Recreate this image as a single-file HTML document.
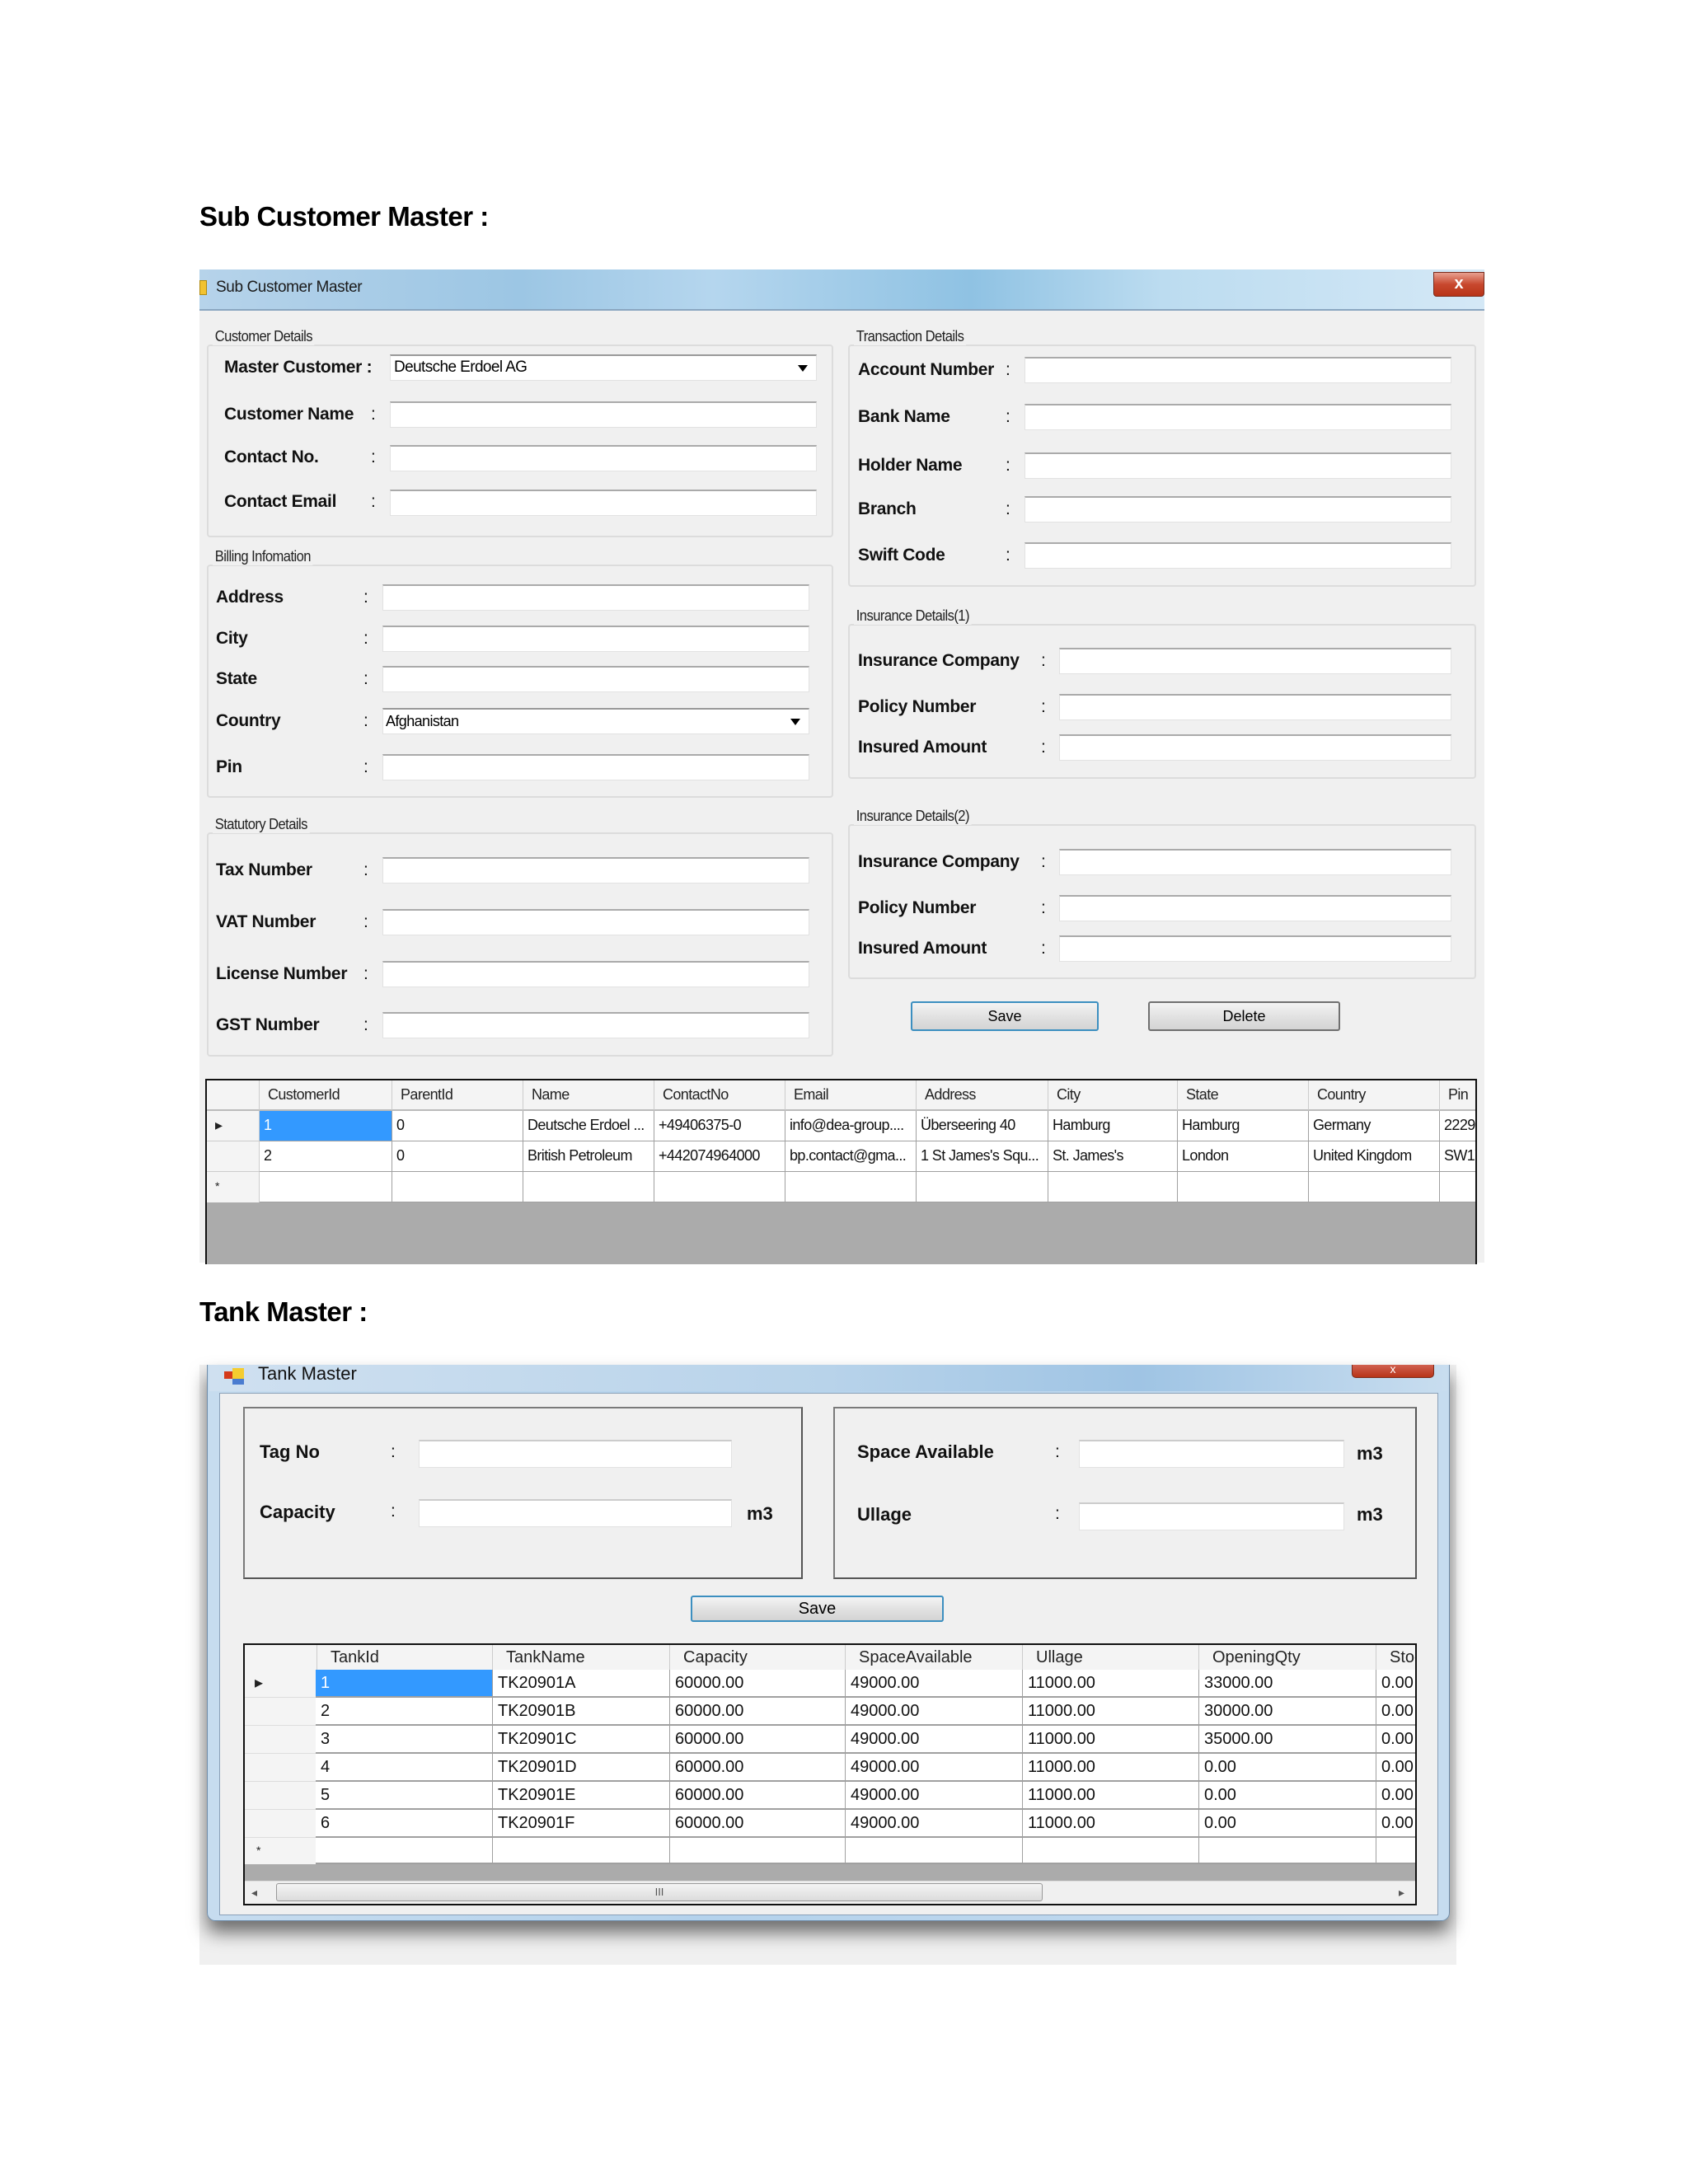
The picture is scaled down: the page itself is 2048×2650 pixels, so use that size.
<!DOCTYPE html>
<html><head><meta charset="utf-8"><style>
*{box-sizing:border-box;margin:0;padding:0}
body{width:2048px;height:2650px;background:#fff;position:relative;font-family:"Liberation Sans",sans-serif;overflow:hidden}
div,span{position:absolute}
.h{font-weight:bold;font-size:33px;color:#000;letter-spacing:-0.5px}
.win{background:#f0f0f0}
.gb{border:2px solid #dcdcdc;border-radius:4px}
.gt{font-size:18px;color:#222;background:#f0f0f0;padding:0 3px;letter-spacing:-0.6px;transform:scaleX(.92);transform-origin:left}
.l{font-size:21px;font-weight:bold;color:#111;letter-spacing:-0.3px}
.c{font-size:21px;color:#111}
.f{background:#fff;border:1px solid #e2e2e2;border-top:2px solid #aaa;height:32px}
.btn{border:2px solid #707070;border-radius:3px;background:linear-gradient(#f4f4f4,#e2e2e2 50%,#d4d4d4);font-size:18px;text-align:center}
.g{background:#fff;border:1px solid #bbb}
.gh{background:#f4f4f4;border-right:1px solid #ccc;border-bottom:2px solid #bbb;font-size:18px;color:#222;padding-left:10px;white-space:nowrap;overflow:hidden;letter-spacing:-0.6px}
.gc{background:#fff;border-right:1px solid #a0a0a0;border-bottom:1px solid #a0a0a0;font-size:18px;color:#111;padding-left:5px;white-space:nowrap;overflow:hidden;letter-spacing:-0.6px}
.tl{font-size:22px;font-weight:bold;color:#111}
.tc{font-size:20px;color:#111;padding-left:6px;white-space:nowrap;overflow:hidden;background:#fff;border-right:1px solid #a0a0a0;border-bottom:2px solid #a0a0a0}
.th{font-size:20px;color:#222;padding-left:16px;white-space:nowrap;overflow:hidden;background:#f4f4f4;border-right:1px solid #ccc;border-bottom:2px solid #bbb}
</style></head><body>

<div class="h" style="left:242px;top:244px">Sub Customer Master :</div>

<!-- window 1 -->
<div class="win" style="left:242px;top:327px;width:1559px;height:1205px"></div>
<div style="left:242px;top:327px;width:1559px;height:50px;background:linear-gradient(90deg,#b6d3ea,#9cc6e4 25%,#b5d6ee 40%,#8fc2e3 60%,#bcdcf0 75%,#d4e8f6);border-bottom:2px solid #8aa6c0"></div>
<div style="left:242px;top:340px;width:9px;height:18px;background:#f2c230;border:1px solid #b08a10"></div>
<div style="left:262px;top:338px;font-size:19px;color:#1a1a1a;letter-spacing:-0.4px">Sub Customer Master</div>
<div style="left:1739px;top:330px;width:62px;height:30px;background:linear-gradient(#e8a090,#c8482e 50%,#b83418);border:1px solid #7a2a1a;border-radius:0 0 4px 4px;color:#fff;font-weight:bold;font-size:20px;text-align:center;line-height:26px">x</div>

<!-- Customer Details -->
<div class="gb" style="left:251px;top:418px;width:760px;height:234px"></div>
<div class="gt" style="left:258px;top:398px">Customer Details</div>
<div class="l" style="left:272px;top:434px">Master Customer :</div>
<div class="f" style="left:473px;top:430px;width:518px;border-top-color:#999"><span style="left:4px;top:3px;font-size:19px;letter-spacing:-0.6px">Deutsche Erdoel AG</span><span style="right:10px;top:11px;width:0;height:0;border-left:6px solid transparent;border-right:6px solid transparent;border-top:8px solid #000"></span></div>
<div class="l" style="left:272px;top:491px">Customer Name</div><div class="c" style="left:450px;top:491px">:</div>
<div class="f" style="left:473px;top:487px;width:518px"></div>
<div class="l" style="left:272px;top:543px">Contact No.</div><div class="c" style="left:450px;top:543px">:</div>
<div class="f" style="left:473px;top:540px;width:518px"></div>
<div class="l" style="left:272px;top:597px">Contact Email</div><div class="c" style="left:450px;top:597px">:</div>
<div class="f" style="left:473px;top:594px;width:518px"></div>

<!-- Billing -->
<div class="gb" style="left:251px;top:685px;width:760px;height:283px"></div>
<div class="gt" style="left:258px;top:665px">Billing Infomation</div>
<div class="l" style="left:262px;top:713px">Address</div><div class="c" style="left:441px;top:713px">:</div><div class="f" style="left:464px;top:709px;width:518px"></div>
<div class="l" style="left:262px;top:763px">City</div><div class="c" style="left:441px;top:763px">:</div><div class="f" style="left:464px;top:759px;width:518px"></div>
<div class="l" style="left:262px;top:812px">State</div><div class="c" style="left:441px;top:812px">:</div><div class="f" style="left:464px;top:808px;width:518px"></div>
<div class="l" style="left:262px;top:863px">Country</div><div class="c" style="left:441px;top:863px">:</div>
<div class="f" style="left:464px;top:859px;width:518px;border-top-color:#999"><span style="left:3px;top:4px;font-size:18px;letter-spacing:-0.6px">Afghanistan</span><span style="right:10px;top:11px;width:0;height:0;border-left:6px solid transparent;border-right:6px solid transparent;border-top:8px solid #000"></span></div>
<div class="l" style="left:262px;top:919px">Pin</div><div class="c" style="left:441px;top:919px">:</div><div class="f" style="left:464px;top:915px;width:518px"></div>

<!-- Statutory -->
<div class="gb" style="left:251px;top:1010px;width:760px;height:272px"></div>
<div class="gt" style="left:258px;top:990px">Statutory Details</div>
<div class="l" style="left:262px;top:1044px">Tax Number</div><div class="c" style="left:441px;top:1044px">:</div><div class="f" style="left:464px;top:1040px;width:518px"></div>
<div class="l" style="left:262px;top:1107px">VAT Number</div><div class="c" style="left:441px;top:1107px">:</div><div class="f" style="left:464px;top:1103px;width:518px"></div>
<div class="l" style="left:262px;top:1170px">License Number</div><div class="c" style="left:441px;top:1170px">:</div><div class="f" style="left:464px;top:1166px;width:518px"></div>
<div class="l" style="left:262px;top:1232px">GST Number</div><div class="c" style="left:441px;top:1232px">:</div><div class="f" style="left:464px;top:1228px;width:518px"></div>

<!-- Transaction -->
<div class="gb" style="left:1029px;top:418px;width:762px;height:294px"></div>
<div class="gt" style="left:1036px;top:398px">Transaction Details</div>
<div class="l" style="left:1041px;top:437px">Account Number</div><div class="c" style="left:1220px;top:437px">:</div><div class="f" style="left:1243px;top:433px;width:518px"></div>
<div class="l" style="left:1041px;top:494px">Bank Name</div><div class="c" style="left:1220px;top:494px">:</div><div class="f" style="left:1243px;top:490px;width:518px"></div>
<div class="l" style="left:1041px;top:553px">Holder Name</div><div class="c" style="left:1220px;top:553px">:</div><div class="f" style="left:1243px;top:549px;width:518px"></div>
<div class="l" style="left:1041px;top:606px">Branch</div><div class="c" style="left:1220px;top:606px">:</div><div class="f" style="left:1243px;top:602px;width:518px"></div>
<div class="l" style="left:1041px;top:662px">Swift Code</div><div class="c" style="left:1220px;top:662px">:</div><div class="f" style="left:1243px;top:658px;width:518px"></div>

<!-- Insurance 1 -->
<div class="gb" style="left:1029px;top:757px;width:762px;height:188px"></div>
<div class="gt" style="left:1036px;top:737px">Insurance Details(1)</div>
<div class="l" style="left:1041px;top:790px">Insurance Company</div><div class="c" style="left:1263px;top:790px">:</div><div class="f" style="left:1285px;top:786px;width:476px"></div>
<div class="l" style="left:1041px;top:846px">Policy Number</div><div class="c" style="left:1263px;top:846px">:</div><div class="f" style="left:1285px;top:842px;width:476px"></div>
<div class="l" style="left:1041px;top:895px">Insured Amount</div><div class="c" style="left:1263px;top:895px">:</div><div class="f" style="left:1285px;top:891px;width:476px"></div>

<!-- Insurance 2 -->
<div class="gb" style="left:1029px;top:1000px;width:762px;height:188px"></div>
<div class="gt" style="left:1036px;top:980px">Insurance Details(2)</div>
<div class="l" style="left:1041px;top:1034px">Insurance Company</div><div class="c" style="left:1263px;top:1034px">:</div><div class="f" style="left:1285px;top:1030px;width:476px"></div>
<div class="l" style="left:1041px;top:1090px">Policy Number</div><div class="c" style="left:1263px;top:1090px">:</div><div class="f" style="left:1285px;top:1086px;width:476px"></div>
<div class="l" style="left:1041px;top:1139px">Insured Amount</div><div class="c" style="left:1263px;top:1139px">:</div><div class="f" style="left:1285px;top:1135px;width:476px"></div>

<div class="btn" style="left:1105px;top:1215px;width:228px;height:36px;border-color:#3c8fc0;line-height:32px">Save</div>
<div class="btn" style="left:1393px;top:1215px;width:233px;height:36px;line-height:32px">Delete</div>

<!-- grid 1 -->
<div style="left:249px;top:1309px;width:1543px;height:225px;background:#ababab;border:2px solid #111;border-bottom:none;overflow:hidden">
<div class="gh" style="left:0;top:0;width:64px;height:37px"></div>
<div class="gh" style="left:64px;top:0;width:161px;height:37px;line-height:35px">CustomerId</div>
<div class="gh" style="left:225px;top:0;width:159px;height:37px;line-height:35px">ParentId</div>
<div class="gh" style="left:384px;top:0;width:159px;height:37px;line-height:35px">Name</div>
<div class="gh" style="left:543px;top:0;width:159px;height:37px;line-height:35px">ContactNo</div>
<div class="gh" style="left:702px;top:0;width:159px;height:37px;line-height:35px">Email</div>
<div class="gh" style="left:861px;top:0;width:160px;height:37px;line-height:35px">Address</div>
<div class="gh" style="left:1021px;top:0;width:157px;height:37px;line-height:35px">City</div>
<div class="gh" style="left:1178px;top:0;width:159px;height:37px;line-height:35px">State</div>
<div class="gh" style="left:1337px;top:0;width:159px;height:37px;line-height:35px">Country</div>
<div class="gh" style="left:1496px;top:0;width:60px;height:37px;line-height:35px">Pin</div>

<div class="gh" style="left:0;top:37px;width:64px;height:37px;line-height:35px;border-bottom:1px solid #ccc">▸</div>
<div class="gc" style="left:64px;top:37px;width:161px;height:37px;line-height:35px;background:#3399ff;color:#fff">1</div>
<div class="gc" style="left:225px;top:37px;width:159px;height:37px;line-height:35px">0</div>
<div class="gc" style="left:384px;top:37px;width:159px;height:37px;line-height:35px">Deutsche Erdoel ...</div>
<div class="gc" style="left:543px;top:37px;width:159px;height:37px;line-height:35px">+49406375-0</div>
<div class="gc" style="left:702px;top:37px;width:159px;height:37px;line-height:35px">info@dea-group....</div>
<div class="gc" style="left:861px;top:37px;width:160px;height:37px;line-height:35px">Überseering 40</div>
<div class="gc" style="left:1021px;top:37px;width:157px;height:37px;line-height:35px">Hamburg</div>
<div class="gc" style="left:1178px;top:37px;width:159px;height:37px;line-height:35px">Hamburg</div>
<div class="gc" style="left:1337px;top:37px;width:159px;height:37px;line-height:35px">Germany</div>
<div class="gc" style="left:1496px;top:37px;width:60px;height:37px;line-height:35px">22297</div>

<div class="gh" style="left:0;top:74px;width:64px;height:37px;border-bottom:1px solid #ccc"></div>
<div class="gc" style="left:64px;top:74px;width:161px;height:37px;line-height:35px">2</div>
<div class="gc" style="left:225px;top:74px;width:159px;height:37px;line-height:35px">0</div>
<div class="gc" style="left:384px;top:74px;width:159px;height:37px;line-height:35px">British Petroleum</div>
<div class="gc" style="left:543px;top:74px;width:159px;height:37px;line-height:35px">+442074964000</div>
<div class="gc" style="left:702px;top:74px;width:159px;height:37px;line-height:35px">bp.contact@gma...</div>
<div class="gc" style="left:861px;top:74px;width:160px;height:37px;line-height:35px">1 St James's Squ...</div>
<div class="gc" style="left:1021px;top:74px;width:157px;height:37px;line-height:35px">St. James's</div>
<div class="gc" style="left:1178px;top:74px;width:159px;height:37px;line-height:35px">London</div>
<div class="gc" style="left:1337px;top:74px;width:159px;height:37px;line-height:35px">United Kingdom</div>
<div class="gc" style="left:1496px;top:74px;width:60px;height:37px;line-height:35px">SW1Y</div>

<div class="gh" style="left:0;top:111px;width:64px;height:37px;line-height:35px;font-size:14px;border-bottom:none">*</div>
<div class="gc" style="left:64px;top:111px;width:161px;height:37px"></div>
<div class="gc" style="left:225px;top:111px;width:159px;height:37px"></div>
<div class="gc" style="left:384px;top:111px;width:159px;height:37px"></div>
<div class="gc" style="left:543px;top:111px;width:159px;height:37px"></div>
<div class="gc" style="left:702px;top:111px;width:159px;height:37px"></div>
<div class="gc" style="left:861px;top:111px;width:160px;height:37px"></div>
<div class="gc" style="left:1021px;top:111px;width:157px;height:37px"></div>
<div class="gc" style="left:1178px;top:111px;width:159px;height:37px"></div>
<div class="gc" style="left:1337px;top:111px;width:159px;height:37px"></div>
<div class="gc" style="left:1496px;top:111px;width:60px;height:37px"></div>
</div>

<!-- Tank master -->
<div class="h" style="left:242px;top:1573px">Tank Master :</div>
<div style="left:242px;top:1656px;width:1525px;height:728px;background:#f0f0f0"></div>
<div style="left:251px;top:1656px;width:1508px;height:675px;border-radius:0 0 10px 10px;background:linear-gradient(90deg,#c6dcef,#b4d2ec 40%,#c6dcef);box-shadow:0 14px 22px rgba(0,0,0,.55);border:1px solid #6e8aa6;border-top:none"></div>
<div style="left:254px;top:1656px;width:1502px;height:32px;background:linear-gradient(90deg,#cfe0f0,#b8d3ea 50%,#9fc4e4 75%,#c8ddef)"></div>
<div style="left:272px;top:1664px;width:10px;height:9px;background:#d43a1a"></div>
<div style="left:282px;top:1660px;width:14px;height:13px;background:#f4cc30"></div>
<div style="left:282px;top:1673px;width:14px;height:7px;background:#4a7cd0"></div>
<div style="left:313px;top:1654px;font-size:22px;color:#111">Tank Master</div>
<div style="left:1640px;top:1656px;width:100px;height:16px;background:linear-gradient(#d06050,#b83418);border-radius:0 0 5px 5px;border:1px solid #7a2a1a;border-top:none;color:#fff;font-size:14px;text-align:center;line-height:10px">x</div>
<div style="left:266px;top:1690px;width:1479px;height:634px;background:#f0f0f0;border:1px solid #8aa0b8"></div>

<div style="left:295px;top:1707px;width:679px;height:209px;border:2px solid #7a7a7a;border-right-color:#555;border-bottom-color:#555"></div>
<div class="tl" style="left:315px;top:1749px">Tag No</div><div class="c" style="left:474px;top:1750px">:</div>
<div class="f" style="left:508px;top:1747px;width:380px;height:34px;border-top-color:#ccc"></div>
<div class="tl" style="left:315px;top:1822px">Capacity</div><div class="c" style="left:474px;top:1822px">:</div>
<div class="f" style="left:508px;top:1819px;width:380px;height:34px;border-top-color:#ccc"></div>
<div class="tl" style="left:906px;top:1824px">m3</div>

<div style="left:1011px;top:1707px;width:708px;height:209px;border:2px solid #7a7a7a;border-right-color:#555;border-bottom-color:#555"></div>
<div class="tl" style="left:1040px;top:1749px">Space Available</div><div class="c" style="left:1280px;top:1750px">:</div>
<div class="f" style="left:1309px;top:1747px;width:322px;height:34px;border-top-color:#ccc"></div>
<div class="tl" style="left:1646px;top:1751px">m3</div>
<div class="tl" style="left:1040px;top:1825px">Ullage</div><div class="c" style="left:1280px;top:1825px">:</div>
<div class="f" style="left:1309px;top:1823px;width:322px;height:34px;border-top-color:#ccc"></div>
<div class="tl" style="left:1646px;top:1825px">m3</div>

<div class="btn" style="left:838px;top:1936px;width:307px;height:32px;border-color:#3c8fc0;line-height:28px;font-size:20px">Save</div>

<!-- grid 2 -->
<div style="left:295px;top:1994px;width:1424px;height:318px;background:#ababab;border:2px solid #111;overflow:hidden">
<div class="th" style="left:0;top:0;width:88px;height:32px"></div>
<div class="th" style="left:88px;top:0;width:213px;height:32px;line-height:30px">TankId</div>
<div class="th" style="left:301px;top:0;width:215px;height:32px;line-height:30px">TankName</div>
<div class="th" style="left:516px;top:0;width:213px;height:32px;line-height:30px">Capacity</div>
<div class="th" style="left:729px;top:0;width:215px;height:32px;line-height:30px">SpaceAvailable</div>
<div class="th" style="left:944px;top:0;width:214px;height:32px;line-height:30px">Ullage</div>
<div class="th" style="left:1158px;top:0;width:215px;height:32px;line-height:30px">OpeningQty</div>
<div class="th" style="left:1373px;top:0;width:60px;height:32px;line-height:30px">Stock</div>
</div>
<div style="left:297px;top:2026px;width:1420px;height:236px;overflow:hidden">
<div class="th" style="left:0;top:0;width:88px;height:34px;line-height:32px;padding-left:12px;border-bottom:1px solid #ddd">▸</div>
<div class="tc" style="left:86px;top:0;width:215px;height:34px;line-height:32px;background:#3399ff;color:#fff">1</div>
<div class="tc" style="left:301px;top:0;width:215px;height:34px;line-height:32px">TK20901A</div>
<div class="tc" style="left:516px;top:0;width:213px;height:34px;line-height:32px">60000.00</div>
<div class="tc" style="left:729px;top:0;width:215px;height:34px;line-height:32px">49000.00</div>
<div class="tc" style="left:944px;top:0;width:214px;height:34px;line-height:32px">11000.00</div>
<div class="tc" style="left:1158px;top:0;width:215px;height:34px;line-height:32px">33000.00</div>
<div class="tc" style="left:1373px;top:0;width:60px;height:34px;line-height:32px">0.00</div>

<div class="th" style="left:0;top:34px;width:88px;height:34px;border-bottom:1px solid #ddd"></div>
<div class="tc" style="left:86px;top:34px;width:215px;height:34px;line-height:32px">2</div>
<div class="tc" style="left:301px;top:34px;width:215px;height:34px;line-height:32px">TK20901B</div>
<div class="tc" style="left:516px;top:34px;width:213px;height:34px;line-height:32px">60000.00</div>
<div class="tc" style="left:729px;top:34px;width:215px;height:34px;line-height:32px">49000.00</div>
<div class="tc" style="left:944px;top:34px;width:214px;height:34px;line-height:32px">11000.00</div>
<div class="tc" style="left:1158px;top:34px;width:215px;height:34px;line-height:32px">30000.00</div>
<div class="tc" style="left:1373px;top:34px;width:60px;height:34px;line-height:32px">0.00</div>

<div class="th" style="left:0;top:68px;width:88px;height:34px;border-bottom:1px solid #ddd"></div>
<div class="tc" style="left:86px;top:68px;width:215px;height:34px;line-height:32px">3</div>
<div class="tc" style="left:301px;top:68px;width:215px;height:34px;line-height:32px">TK20901C</div>
<div class="tc" style="left:516px;top:68px;width:213px;height:34px;line-height:32px">60000.00</div>
<div class="tc" style="left:729px;top:68px;width:215px;height:34px;line-height:32px">49000.00</div>
<div class="tc" style="left:944px;top:68px;width:214px;height:34px;line-height:32px">11000.00</div>
<div class="tc" style="left:1158px;top:68px;width:215px;height:34px;line-height:32px">35000.00</div>
<div class="tc" style="left:1373px;top:68px;width:60px;height:34px;line-height:32px">0.00</div>

<div class="th" style="left:0;top:102px;width:88px;height:34px;border-bottom:1px solid #ddd"></div>
<div class="tc" style="left:86px;top:102px;width:215px;height:34px;line-height:32px">4</div>
<div class="tc" style="left:301px;top:102px;width:215px;height:34px;line-height:32px">TK20901D</div>
<div class="tc" style="left:516px;top:102px;width:213px;height:34px;line-height:32px">60000.00</div>
<div class="tc" style="left:729px;top:102px;width:215px;height:34px;line-height:32px">49000.00</div>
<div class="tc" style="left:944px;top:102px;width:214px;height:34px;line-height:32px">11000.00</div>
<div class="tc" style="left:1158px;top:102px;width:215px;height:34px;line-height:32px">0.00</div>
<div class="tc" style="left:1373px;top:102px;width:60px;height:34px;line-height:32px">0.00</div>

<div class="th" style="left:0;top:136px;width:88px;height:34px;border-bottom:1px solid #ddd"></div>
<div class="tc" style="left:86px;top:136px;width:215px;height:34px;line-height:32px">5</div>
<div class="tc" style="left:301px;top:136px;width:215px;height:34px;line-height:32px">TK20901E</div>
<div class="tc" style="left:516px;top:136px;width:213px;height:34px;line-height:32px">60000.00</div>
<div class="tc" style="left:729px;top:136px;width:215px;height:34px;line-height:32px">49000.00</div>
<div class="tc" style="left:944px;top:136px;width:214px;height:34px;line-height:32px">11000.00</div>
<div class="tc" style="left:1158px;top:136px;width:215px;height:34px;line-height:32px">0.00</div>
<div class="tc" style="left:1373px;top:136px;width:60px;height:34px;line-height:32px">0.00</div>

<div class="th" style="left:0;top:170px;width:88px;height:34px;border-bottom:1px solid #ddd"></div>
<div class="tc" style="left:86px;top:170px;width:215px;height:34px;line-height:32px">6</div>
<div class="tc" style="left:301px;top:170px;width:215px;height:34px;line-height:32px">TK20901F</div>
<div class="tc" style="left:516px;top:170px;width:213px;height:34px;line-height:32px">60000.00</div>
<div class="tc" style="left:729px;top:170px;width:215px;height:34px;line-height:32px">49000.00</div>
<div class="tc" style="left:944px;top:170px;width:214px;height:34px;line-height:32px">11000.00</div>
<div class="tc" style="left:1158px;top:170px;width:215px;height:34px;line-height:32px">0.00</div>
<div class="tc" style="left:1373px;top:170px;width:60px;height:34px;line-height:32px">0.00</div>

<div class="th" style="left:0;top:204px;width:88px;height:32px;line-height:30px;font-size:14px;padding-left:14px;border-bottom:none">*</div>
<div class="tc" style="left:86px;top:204px;width:215px;height:32px"></div>
<div class="tc" style="left:301px;top:204px;width:215px;height:32px"></div>
<div class="tc" style="left:516px;top:204px;width:213px;height:32px"></div>
<div class="tc" style="left:729px;top:204px;width:215px;height:32px"></div>
<div class="tc" style="left:944px;top:204px;width:214px;height:32px"></div>
<div class="tc" style="left:1158px;top:204px;width:215px;height:32px"></div>
<div class="tc" style="left:1373px;top:204px;width:60px;height:32px"></div>
</div>
<!-- scrollbar -->
<div style="left:297px;top:2282px;width:1420px;height:28px;background:#f0f0f0;border-top:1px solid #ddd"></div>
<div style="left:305px;top:2288px;font-size:14px;color:#555">◂</div>
<div style="left:1697px;top:2288px;font-size:14px;color:#555">▸</div>
<div style="left:335px;top:2285px;width:930px;height:22px;background:linear-gradient(#f4f4f4,#dcdcdc);border:1px solid #999;border-radius:3px;text-align:center;font-size:13px;line-height:20px;color:#555">III</div>

</body></html>
